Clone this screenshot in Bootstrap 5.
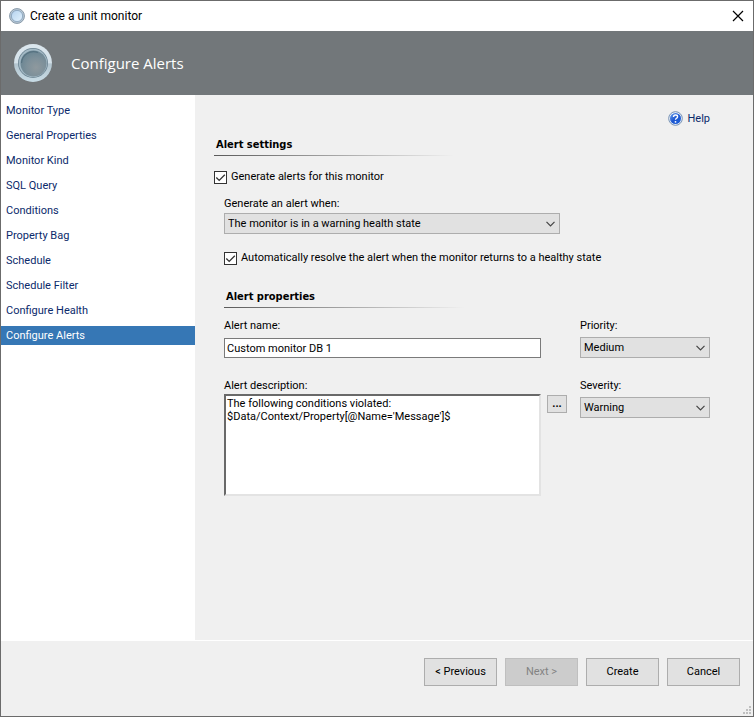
<!DOCTYPE html>
<html lang="en">
<head>
<meta charset="utf-8">
<meta name="viewport" content="width=device-width, initial-scale=1">
<title>Create a unit monitor</title>
<link href="https://cdn.jsdelivr.net/npm/bootstrap@5.3.0/dist/css/bootstrap.min.css" rel="stylesheet">
<style>
  body { font-family: Roboto, "Liberation Sans", sans-serif; font-size: 11px; line-height: 14px; color: #000; background: #f0f0f0; }
  .wizard { border: 1px solid #6b6b6b; background: #f0f0f0; }
  .title-bar { height: 30px; padding: 0 9px 0 8px; gap: 5px; background: #fff; }
  .title-text { font-size: 12px; line-height: 16px; font-weight: 400; }
  .close-btn { line-height: 0; }
  .banner { height: 64px; padding-left: 12px; gap: 18px; background: #72777a; color: #fff; }
  .banner-text { font-family: "Open Sans", sans-serif; font-size: 15px; line-height: 22px; font-weight: 400; }
  .steps { width: 194px; padding-top: 6px; background: #fff; gap: 6px; }
  .steps .step { padding: 0 5px; line-height: 19px; color: #0b2a6b; text-decoration: none; }
  .steps .step.active { background: #3677b5; color: #fff; }
  .content-pane { padding: 16px 43px 0 19px; border-bottom: 1px solid #fff; }
  .help-link { gap: 4px; color: #0b2a6b; text-decoration: none; line-height: 15px; }
  .section-title { font-family: "DejaVu Sans Condensed", "DejaVu Sans", sans-serif; font-size: 11px; line-height: 14px; font-weight: 700; padding: 0 0 3px 2px; }
  .section-rule { height: 1px; width: 240px; background: linear-gradient(to right, #5a5a5a, #f0f0f0); }
  .indent { padding-left: 10px; }
  .check-row { gap: 4px; }
  .check-row .form-check-input { width: 13px; height: 13px; margin: 0; border: 1px solid #333; border-radius: 0; background-color: #fff; }
  .check-row .form-check-input:checked { background-color: #fff; background-size: 11px 11px; background-image: url("data:image/svg+xml,%3Csvg xmlns='http://www.w3.org/2000/svg' viewBox='0 0 11 11'%3E%3Cpath d='M1.3 5.5 4.2 8.4 9.8 2.7' fill='none' stroke='%23333' stroke-width='1.3'/%3E%3C/svg%3E"); }
  .alert-switch { margin-top: 14px; }
  .condition-group { margin-top: 13px; }
  .resolve-switch { margin-top: 17px; }
  .properties-group { margin-top: 25px; }
  .fields { margin-top: 11px; }
  .form-select { height: 21px; padding: 0 22px 0 3px; font-size: 11px; line-height: 14px; color: #000; border: 1px solid #adadad; border-radius: 0; background-color: #e1e1e1; background-size: 9px 6px; background-position: right 4px center; background-image: url("data:image/svg+xml,%3Csvg xmlns='http://www.w3.org/2000/svg' viewBox='0 0 9 6'%3E%3Cpath d='M.5 .8 4.5 4.8 8.5 .8' fill='none' stroke='%23444' stroke-width='1.2'/%3E%3C/svg%3E"); }
  .condition-select { max-width: 336px; margin-top: 2px; }
  .form-control { padding: 0 2px; font-size: 11px; line-height: 14px; color: #000; border: 1px solid #7a7a7a; border-radius: 0; }
  .name-input { height: 20px; margin-top: 5px; }
  .desc-box { height: 102px; margin-top: 1px; padding: 1px; line-height: 13px; resize: none; border: 2px solid; border-color: #696969 #e3e3e3 #e3e3e3 #696969; }
  .field-label { display: block; line-height: 14px; }
  .side-fields { width: 130px; margin-left: 13px; }
  .side-fields .form-select { margin-top: 4px; }
  .field-row { min-height: 60px; }
  .name-field { margin-right: 26px; }
  .more-btn { width: 20px; height: 18px; margin: 2px 0 0 6px; }
  .win-btn { padding: 0; font-size: 11px; line-height: 14px; color: #000; background: #e1e1e1; border: 1px solid #adadad; border-radius: 0; }
  .win-btn:disabled { color: #838383; background: #ccc; border-color: #bfbfbf; opacity: 1; }
  .action-bar { padding: 17px 13px 30px; gap: 8px; }
  .action-bar .win-btn { width: 73px; height: 28px; }
  .size-grip { right: 2px; bottom: 2px; line-height: 0; }
</style>
</head>
<body>
<div class="wizard d-flex flex-column min-vh-100 position-relative">
  <header class="title-bar d-flex align-items-center">
    <svg width="16" height="16" viewBox="0 0 17 17" aria-hidden="true">
      <defs><linearGradient id="orb" x1="0" y1="0" x2="1" y2="1"><stop offset="0" stop-color="#b4d2ee"/><stop offset="1" stop-color="#e3f2fd"/></linearGradient></defs>
      <circle cx="8.500" cy="8.500" r="7.900" fill="#b9c8d5" stroke="#8496a6"/>
      <circle cx="8.500" cy="8.500" r="6" fill="url(#orb)" stroke="#7f9bb5" stroke-width=".8"/>
    </svg>
    <h1 class="title-text m-0 flex-grow-1">Create a unit monitor</h1>
    <button type="button" class="close-btn btn p-0 border-0" aria-label="Close">
      <svg width="12" height="12" viewBox="0 0 12 12"><path d="M1 1 11 11M11 1 1 11" stroke="#000" stroke-width="1.200"/></svg>
    </button>
  </header>
  <div class="banner d-flex align-items-center">
    <svg width="40" height="40" viewBox="0 0 40 40" aria-hidden="true">
      <defs>
        <linearGradient id="rim" x1="0" y1="0" x2="0" y2="1"><stop offset="0" stop-color="#dbe7ee"/><stop offset=".5" stop-color="#d3e0e8"/><stop offset=".52" stop-color="#b3c5cf"/><stop offset="1" stop-color="#c8dce6"/></linearGradient>
        <radialGradient id="lens" cx=".6" cy=".65" r=".6"><stop offset="0" stop-color="#8f999e"/><stop offset=".6" stop-color="#7d909a"/><stop offset="1" stop-color="#6d8794"/></radialGradient>
      </defs>
      <circle cx="20" cy="20" r="19" fill="url(#rim)"/>
      <circle cx="20" cy="20" r="15" fill="#6c8492"/>
      <circle cx="20" cy="20" r="14.200" fill="#a3b9c5"/>
      <circle cx="20.500" cy="20.500" r="13" fill="url(#lens)"/>
      <path d="M8.500 20A12 12 0 0 1 25 9.500" fill="none" stroke="#567281" stroke-width="1.200"/>
    </svg>
    <h2 class="banner-text m-0">Configure Alerts</h2>
  </div>
  <div class="d-flex flex-grow-1">
    <nav class="steps d-flex flex-column flex-shrink-0" aria-label="Wizard steps">
      <a class="step" href="#">Monitor Type</a>
      <a class="step" href="#">General Properties</a>
      <a class="step" href="#">Monitor Kind</a>
      <a class="step" href="#">SQL Query</a>
      <a class="step" href="#">Conditions</a>
      <a class="step" href="#">Property Bag</a>
      <a class="step" href="#">Schedule</a>
      <a class="step" href="#">Schedule Filter</a>
      <a class="step" href="#">Configure Health</a>
      <a class="step active" href="#" aria-current="step">Configure Alerts</a>
    </nav>
    <main class="content-pane flex-grow-1">
      <div class="d-flex justify-content-end mb-2 pb-1">
        <a class="help-link d-flex align-items-center" href="#">
          <svg width="15" height="15" viewBox="0 0 15 15" aria-hidden="true">
            <defs><linearGradient id="helpfill" x1="0" y1="0" x2="1" y2="1"><stop offset="0" stop-color="#6da2ee"/><stop offset=".5" stop-color="#1c56cf"/><stop offset="1" stop-color="#1c62dc"/></linearGradient></defs>
            <circle cx="7.500" cy="7.500" r="6.800" fill="#eef4fb" stroke="#6685ab" stroke-width=".9"/>
            <circle cx="7.500" cy="7.500" r="5.500" fill="url(#helpfill)"/>
            <path d="M5.500 6Q5.600 4 7.600 4T9.600 5.700Q9.600 6.700 8.400 7.300Q7.500 7.800 7.500 8.800" fill="none" stroke="#fff" stroke-width="1.400"/><circle cx="7.500" cy="10.800" r=".9" fill="#fff"/>
          </svg>
          <span>Help</span>
        </a>
      </div>
      <section>
        <h3 class="section-title m-0">Alert settings</h3>
        <div class="section-rule"></div>
        <div class="check-row alert-switch d-flex align-items-center">
          <input class="form-check-input" type="checkbox" id="generate" checked>
          <label for="generate">Generate alerts for this monitor</label>
        </div>
        <div class="indent condition-group">
          <label class="field-label" for="condition">Generate an alert when:</label>
          <select class="form-select condition-select" id="condition"><option>The monitor is in a warning health state</option></select>
          <div class="check-row resolve-switch d-flex align-items-center">
            <input class="form-check-input" type="checkbox" id="resolve" checked>
            <label for="resolve">Automatically resolve the alert when the monitor returns to a healthy state</label>
          </div>
        </div>
      </section>
      <section class="indent properties-group">
        <h3 class="section-title m-0">Alert properties</h3>
        <div class="section-rule"></div>
        <div class="fields d-flex">
          <div class="flex-grow-1">
            <div class="field-row name-field">
              <label class="field-label" for="alertName">Alert name:</label>
              <input class="form-control name-input" type="text" id="alertName" value="Custom monitor DB 1">
            </div>
            <label class="field-label" for="alertDesc">Alert description:</label>
            <div class="d-flex">
              <textarea class="form-control desc-box" id="alertDesc">The following conditions violated:
$Data/Context/Property[@Name='Message']$</textarea>
              <button type="button" class="btn win-btn more-btn flex-shrink-0 fw-bold" aria-label="Insert variable">...</button>
            </div>
          </div>
          <div class="side-fields flex-shrink-0">
            <div class="field-row">
              <label class="field-label" for="priority">Priority:</label>
              <select class="form-select" id="priority"><option>Medium</option></select>
            </div>
            <label class="field-label" for="severity">Severity:</label>
            <select class="form-select" id="severity"><option>Warning</option></select>
          </div>
        </div>
      </section>
    </main>
  </div>
  <footer class="action-bar d-flex justify-content-end">
    <button type="button" class="btn win-btn">&lt; Previous</button>
    <button type="button" class="btn win-btn" disabled>Next &gt;</button>
    <button type="button" class="btn win-btn">Create</button>
    <button type="button" class="btn win-btn">Cancel</button>
  </footer>
  <div class="size-grip position-absolute">
    <svg width="8" height="8" viewBox="0 0 8 8" fill="#bfbfbf" aria-hidden="true"><path d="M6 0h2v2H6zM3 3h2v2H3zM6 3h2v2H6zM0 6h2v2H0zM3 6h2v2H3zM6 6h2v2H6z"/></svg>
  </div>
</div>
<script src="https://cdn.jsdelivr.net/npm/bootstrap@5.3.0/dist/js/bootstrap.bundle.min.js"></script>
</body>
</html>
